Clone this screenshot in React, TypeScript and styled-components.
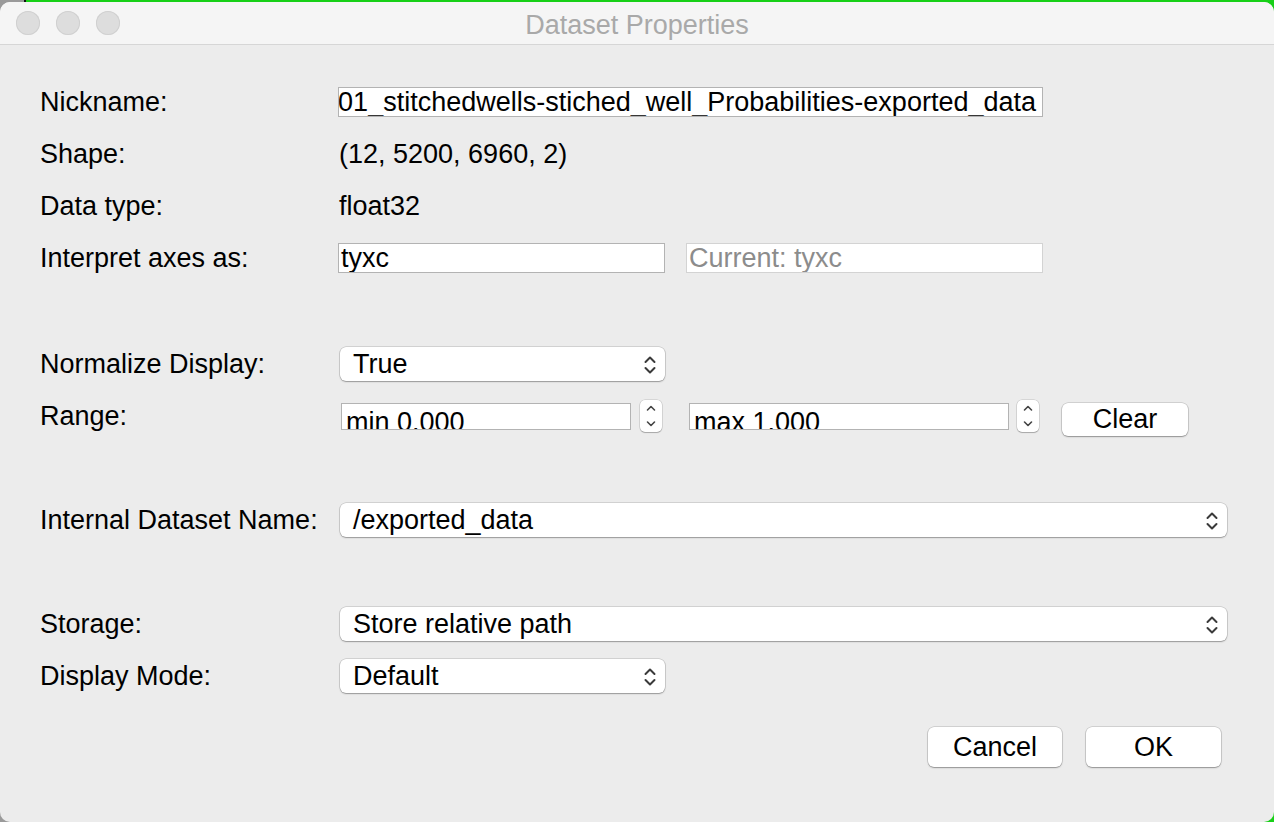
import React from "react";
import styled, { createGlobalStyle } from "styled-components";

const Global = createGlobalStyle`
  html, body { margin: 0; padding: 0; }
  body {
    width: 1274px;
    height: 822px;
    overflow: hidden;
    background: linear-gradient(90deg, #9a9a9a 0px, #9a9a9a 24px, #111 24px, #111 26px, #17d017 26px);
    font-family: "Liberation Sans", Arial, Helvetica, sans-serif;
  }
  #root { height: 100%; }
`;

const Window = styled.div`
  margin-top: 2px;
  height: 820px;
  width: 1274px;
  border-radius: 10px;
  overflow: hidden;
  background: #ececec;
  display: flex;
  flex-direction: column;
`;

const TitleBar = styled.div`
  height: 42px;
  flex: none;
  background: #f5f5f5;
  border-bottom: 1px solid #d6d6d6;
  display: flex;
  align-items: center;
  position: relative;
`;

const Lights = styled.div`
  display: flex;
  gap: 16px;
  padding-left: 16px;
`;

const Light = styled.span`
  width: 24px;
  height: 24px;
  border-radius: 50%;
  background: #dddddd;
  box-shadow: inset 0 0 0 1px #d0d0d0;
`;

const Title = styled.div`
  position: absolute;
  left: 0;
  right: 0;
  text-align: center;
  font-size: 27px;
  color: #a9a9a9;
  pointer-events: none;
  top: 8px;
`;

const Body = styled.div`
  padding: 31px 47px 0 40px;
  display: grid;
  grid-template-columns: 298px 1fr;
  font-size: 27px;
  color: #000;
`;

const Label = styled.div`
  height: 52px;
  display: flex;
  align-items: center;
  padding-top: 1px;
  box-sizing: border-box;
`;

const Cell = styled.div<{ $gap?: number }>`
  height: 52px;
  display: flex;
  align-items: center;
  gap: ${(p) => p.$gap ?? 0}px;
`;

const Spacer = styled.div<{ $h: number }>`
  grid-column: 1 / span 2;
  height: ${(p) => p.$h}px;
`;

const Field = styled.div<{ $w: number; $muted?: boolean; $end?: boolean }>`
  width: ${(p) => p.$w}px;
  height: 30px;
  box-sizing: border-box;
  background: #fff;
  border: 1px solid ${(p) => (p.$muted ? "#d3d3d3" : "#b3b3b3")};
  color: ${(p) => (p.$muted ? "#8c8c8c" : "#000")};
  display: flex;
  align-items: center;
  justify-content: ${(p) => (p.$end ? "flex-end" : "flex-start")};
  padding: 0 6px 0 2px;
  overflow: hidden;
  white-space: nowrap;
  font-size: 27px;
  line-height: 28px;
`;

const Plain = styled.div`
  margin-left: 1px;
`;

const Combo = styled.div<{ $w?: number }>`
  width: ${(p) => (p.$w ? `${p.$w}px` : "100%")};
  height: 34px;
  box-sizing: border-box;
  background: #fff;
  border-radius: 6px;
  box-shadow: 0 0 0 0.5px rgba(0, 0, 0, 0.22), 0 1px 1.5px rgba(0, 0, 0, 0.28);
  display: flex;
  align-items: center;
  justify-content: space-between;
  padding: 1px 8px 0 13px;
  margin-left: 2px;
  font-size: 27px;
`;

const SpinField = styled.div<{ $w: number }>`
  width: ${(p) => p.$w}px;
  height: 27px;
  box-sizing: border-box;
  background: #fff;
  border: 1px solid #b3b3b3;
  overflow: hidden;
  white-space: nowrap;
  padding-left: 4px;
  font-size: 27px;
  line-height: 27px;
  padding-top: 5px;
`;

const SpinArrows = styled.div`
  width: 22px;
  height: 32px;
  background: #fff;
  border-radius: 5px;
  box-shadow: 0 0 0 0.5px rgba(0, 0, 0, 0.18), 0 1px 1px rgba(0, 0, 0, 0.22);
  display: flex;
  align-items: center;
  justify-content: center;
`;

const PushButton = styled.div<{ $w: number; $h: number; $drop?: number }>`
  width: ${(p) => p.$w}px;
  height: ${(p) => p.$h}px;
  margin-top: ${(p) => p.$drop ?? 0}px;
  box-sizing: border-box;
  background: #fff;
  border-radius: 6px;
  box-shadow: 0 0 0 0.5px rgba(0, 0, 0, 0.22), 0 1px 1.5px rgba(0, 0, 0, 0.3);
  display: flex;
  align-items: center;
  justify-content: center;
  padding-top: 1px;
  font-size: 27px;
`;

const RangeCell = styled.div`
  height: 52px;
  display: flex;
  align-items: center;
  padding-left: 3px;
`;

const Gap = styled.span<{ $w: number }>`
  width: ${(p) => p.$w}px;
  flex: none;
`;

const Buttons = styled.div`
  display: flex;
  justify-content: flex-end;
  gap: 24px;
  padding: 25px 53px 0 0;
`;

const UpDown = () => (
  <svg width={14} height={24} viewBox="0 0 14 24" fill="none">
    <path d="M2.5 9 L7 4.5 L11.5 9" stroke="#3a3a3a" strokeWidth="2" strokeLinecap="round" strokeLinejoin="round" />
    <path d="M2.5 15 L7 19.5 L11.5 15" stroke="#3a3a3a" strokeWidth="2" strokeLinecap="round" strokeLinejoin="round" />
  </svg>
);

const SmallUpDown = () => (
  <svg width={12} height={28} viewBox="0 0 12 28" fill="none">
    <path d="M2.5 8 L6 4.5 L9.5 8" stroke="#444" strokeWidth="1.6" strokeLinecap="round" strokeLinejoin="round" />
    <path d="M2.5 20 L6 23.5 L9.5 20" stroke="#444" strokeWidth="1.6" strokeLinecap="round" strokeLinejoin="round" />
  </svg>
);

export default function App() {
  return (
    <>
      <Global />
      <Window>
        <TitleBar>
          <Lights>
            <Light />
            <Light />
            <Light />
          </Lights>
          <Title>Dataset Properties</Title>
        </TitleBar>
        <Body>
          <Label>Nickname:</Label>
          <Cell>
            <Field $w={705} $end>
              001_stitchedwells-stiched_well_Probabilities-exported_data
            </Field>
          </Cell>

          <Label>Shape:</Label>
          <Cell>
            <Plain>(12, 5200, 6960, 2)</Plain>
          </Cell>

          <Label>Data type:</Label>
          <Cell>
            <Plain>float32</Plain>
          </Cell>

          <Label>Interpret axes as:</Label>
          <Cell $gap={21}>
            <Field $w={327}>tyxc</Field>
            <Field $w={357} $muted>
              Current: tyxc
            </Field>
          </Cell>

          <Spacer $h={54} />

          <Label>Normalize Display:</Label>
          <Cell>
            <Combo $w={325}>
              <span>True</span>
              <UpDown />
            </Combo>
          </Cell>

          <Label>Range:</Label>
          <RangeCell>
            <SpinField $w={290}>min 0.000</SpinField>
            <Gap $w={9} />
            <SpinArrows>
              <SmallUpDown />
            </SpinArrows>
            <Gap $w={27} />
            <SpinField $w={320}>max 1.000</SpinField>
            <Gap $w={8} />
            <SpinArrows>
              <SmallUpDown />
            </SpinArrows>
            <Gap $w={23} />
            <PushButton $w={126} $h={33} $drop={6}>
              Clear
            </PushButton>
          </RangeCell>

          <Spacer $h={52} />

          <Label>Internal Dataset Name:</Label>
          <Cell>
            <Combo>
              <span>/exported_data</span>
              <UpDown />
            </Combo>
          </Cell>

          <Spacer $h={52} />

          <Label>Storage:</Label>
          <Cell>
            <Combo>
              <span>Store relative path</span>
              <UpDown />
            </Combo>
          </Cell>

          <Label>Display Mode:</Label>
          <Cell>
            <Combo $w={325}>
              <span>Default</span>
              <UpDown />
            </Combo>
          </Cell>
        </Body>
        <Buttons>
          <PushButton $w={134} $h={40}>
            Cancel
          </PushButton>
          <PushButton $w={135} $h={40}>
            OK
          </PushButton>
        </Buttons>
      </Window>
    </>
  );
}
